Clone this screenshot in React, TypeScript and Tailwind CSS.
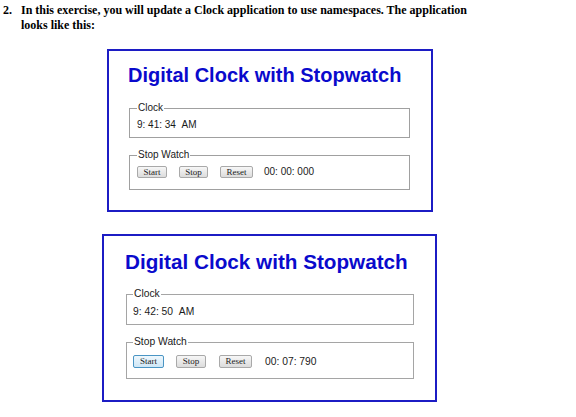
import React from 'react';

type BtnProps = { label: string; w: string; h: string; focused?: boolean; className?: string };

function WinButton({ label, w, h, focused, className = '' }: BtnProps) {
  return (
    <button
      type="button"
      className={`${w} ${h} ${className} flex items-center justify-center rounded-[2px] border text-[9px] leading-none text-[#222] font-['Liberation_Serif',serif] ${
        focused
          ? 'border-[#4a95c4] bg-gradient-to-b from-[#eef7fd] to-[#cfe7f6]'
          : 'border-[#a9a9a9] bg-gradient-to-b from-[#f7f7f7] to-[#dcdcdc]'
      }`}
    >
      {label}
    </button>
  );
}

export default function App() {
  return (
    <div className="min-h-[417px] w-[576px] bg-white font-['Liberation_Sans',Arial,sans-serif] text-[#1a1a1a]">
      {/* Question text */}
      <div className="flex pt-[3px] font-['Liberation_Serif','Times_New_Roman',serif] text-[12px] leading-[15px] font-bold text-black">
        <span className="w-[21px] pl-[3px]">2.</span>
        <p className="w-[470px]">
          In this exercise, you will update a Clock application to use namespaces. The application looks like this:
        </p>
      </div>

      {/* First window */}
      <div className="ml-[107px] mt-[16px] w-[326px] border-2 border-[#1c1cc4] pt-[12px] pr-[21px] pb-[20px] pl-[20px]">
        <h1 className="-ml-[1px] text-[20px] leading-[24px] font-bold text-[#0a0acc]">Digital Clock with Stopwatch</h1>

        <fieldset className="mt-[15px] border border-[#a0a0a0] pt-[5px] pb-[6px] pl-[7px] pr-[7px]">
          <legend className="px-[1px] text-[10px] leading-[12px]">Clock</legend>
          <div className="text-[10px] leading-[12px]">9: 41: 34&nbsp;&nbsp;AM</div>
        </fieldset>

        <fieldset className="mt-[11px] border border-[#a0a0a0] pt-[5px] pb-[11px] pl-[7px] pr-[7px]">
          <legend className="px-[1px] text-[10px] leading-[12px]">Stop Watch</legend>
          <div className="flex items-center">
            <WinButton label="Start" w="w-[30px]" h="h-[12px]" />
            <WinButton label="Stop" w="w-[29px]" h="h-[12px]" className="ml-[12px]" />
            <WinButton label="Reset" w="w-[33px]" h="h-[12px]" className="ml-[12px]" />
            <span className="ml-[11px] text-[10px] leading-[12px]">00: 00: 000</span>
          </div>
        </fieldset>
      </div>

      {/* Second window */}
      <div className="ml-[102px] mt-[22px] w-[335px] border-2 border-[#1c1cc4] pt-[13px] pr-[21px] pb-[21px] pl-[22px]">
        <h1 className="-ml-[1px] text-[20.7px] leading-[25px] font-bold text-[#0a0acc]">Digital Clock with Stopwatch</h1>

        <fieldset className="mt-[14px] border border-[#a5a5a5] pt-[6px] pb-[6px] pl-[6px] pr-[6px]">
          <legend className="px-[1px] text-[10.3px] leading-[12px]">Clock</legend>
          <div className="text-[10.3px] leading-[12px]">9: 42: 50&nbsp;&nbsp;AM</div>
        </fieldset>

        <fieldset className="mt-[11px] border border-[#a5a5a5] pt-[7px] pb-[10px] pl-[6px] pr-[6px]">
          <legend className="px-[1px] text-[10.3px] leading-[12px]">Stop Watch</legend>
          <div className="flex items-center">
            <WinButton label="Start" w="w-[31px]" h="h-[13px]" focused />
            <WinButton label="Stop" w="w-[30px]" h="h-[13px]" className="ml-[12px]" />
            <WinButton label="Reset" w="w-[33px]" h="h-[13px]" className="ml-[13px]" />
            <span className="ml-[13px] text-[10.3px] leading-[12px]">00: 07: 790</span>
          </div>
        </fieldset>
      </div>
    </div>
  );
}
